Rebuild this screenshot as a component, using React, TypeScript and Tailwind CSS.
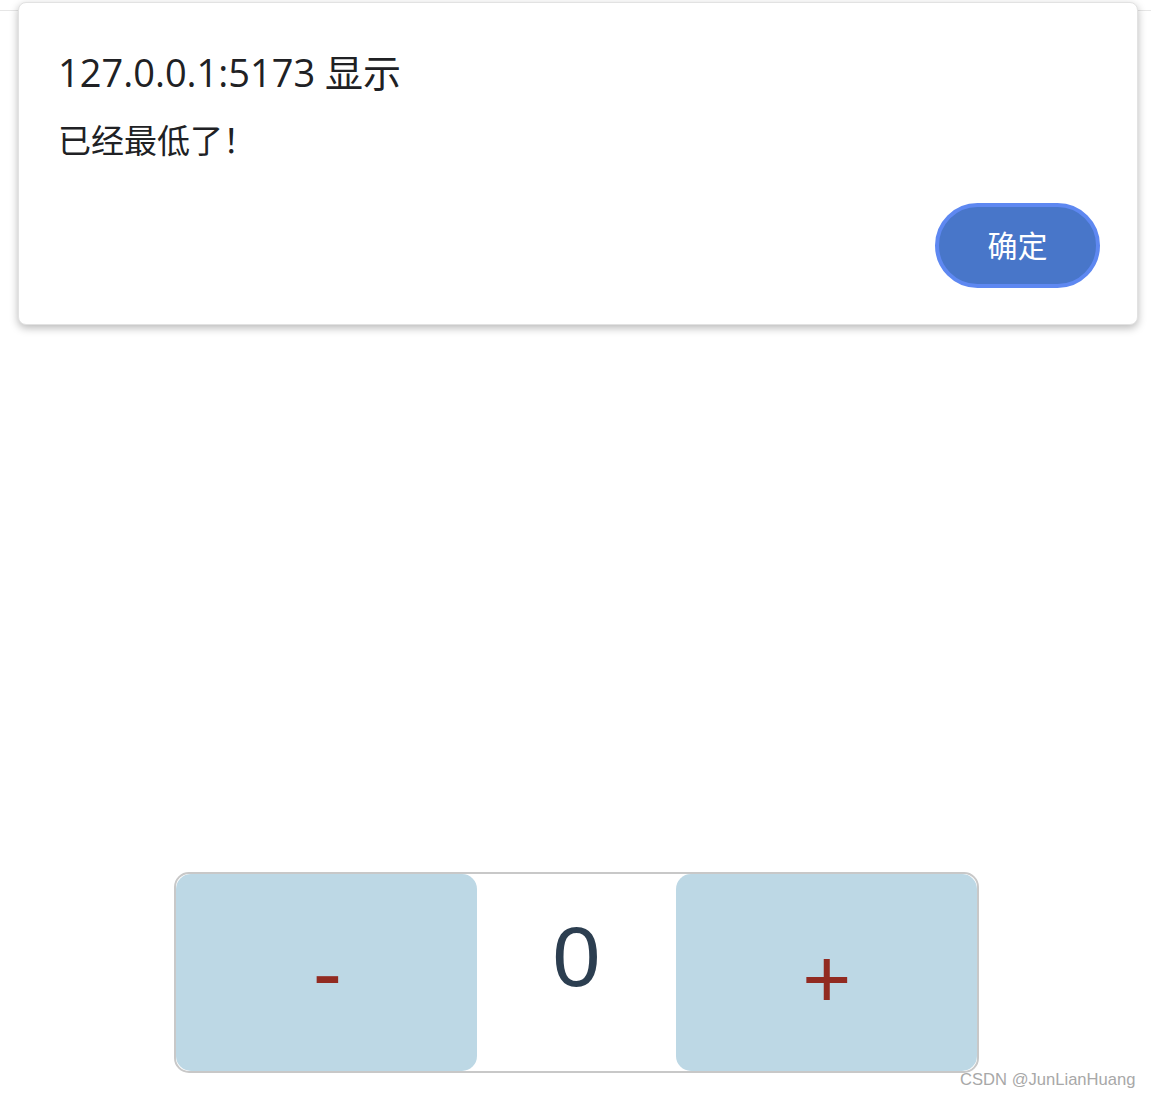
export default function App() {
  return (
    <div className="relative w-[1151px] h-[1099px] bg-white overflow-hidden font-['Open_Sans','Noto_Sans_CJK_SC',sans-serif]">
      {/* browser strip edge behind the dialog */}
      <div className="h-[11px] border-b border-[#e6e6e6]" />

      {/* counter */}
      <div className="flex justify-center pt-[861px] pl-[2px]">
        <div className="flex w-[805px] h-[201px] rounded-[15px] border-2 border-[#c8c8c8] overflow-hidden">
          <button className="w-[301px] h-full bg-[#bdd8e5] rounded-[15px] flex items-center justify-center pl-[2px] text-[88px] leading-none text-[#922b21] font-['Liberation_Sans',sans-serif]">
            -
          </button>
          <div className="w-[200px] flex justify-center pt-[33px] text-[86px] leading-[1.15] text-[#2c3e50] font-['Liberation_Sans',sans-serif]">
            0
          </div>
          <button className="w-[301px] h-full bg-[#bdd8e5] rounded-[15px] flex items-center justify-center pt-[10px] text-[84px] leading-none text-[#922b21] font-['Liberation_Sans',sans-serif]">
            +
          </button>
        </div>
      </div>

      {/* alert dialog */}
      <div className="absolute left-[18px] top-[2px] w-[1120px] h-[323px] bg-white rounded-[8px] shadow-[0_3px_8px_rgba(0,0,0,0.28)] border border-[#e2e2e2] px-[39px] pt-[44px] flex flex-col">
        <div className="text-[38px] leading-[50px] text-[#202124]">127.0.0.1:5173 显示</div>
        <div className="mt-[22px] text-[33px] leading-[44px] text-[#202124]">已经最低了！</div>
        <div className="flex justify-end mt-[40px] -mr-[2px]">
          <button className="w-[165px] h-[85px] rounded-full bg-[#4876c9] border-[4px] border-[#5e88f1] text-white text-[30px] flex items-center justify-center">
            确定
          </button>
        </div>
      </div>

      {/* watermark */}
      <div className="absolute left-[960px] top-[1068px] text-[16.6px] text-[#a8a8a8] font-['Liberation_Sans',sans-serif]">
        CSDN @JunLianHuang
      </div>
    </div>
  );
}
